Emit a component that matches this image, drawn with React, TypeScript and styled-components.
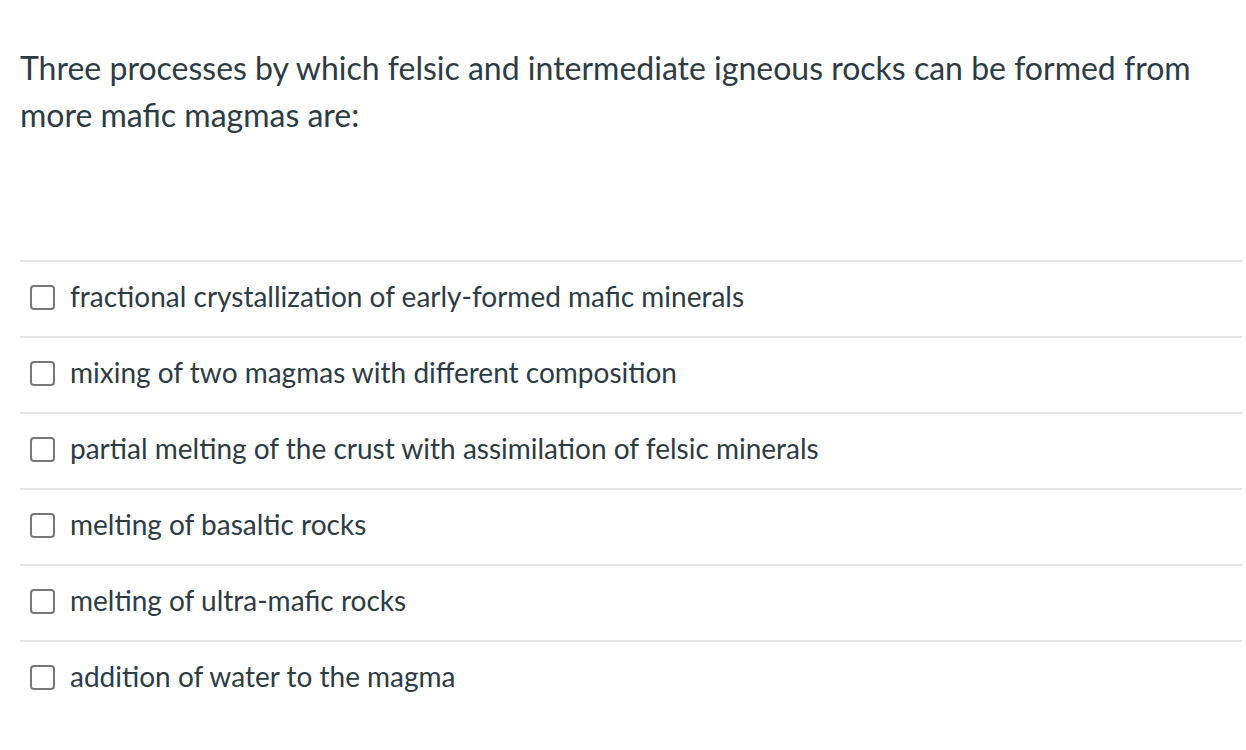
import React from 'react';
import styled, { createGlobalStyle } from 'styled-components';

const GlobalStyle = createGlobalStyle`
  body {
    margin: 0;
    background: #fff;
    font-family: Lato, "Noto Sans", sans-serif;
    color: #2d3b45;
  }
`;

const Page = styled.div`
  padding: 44px 4px 0 20px;
`;

const Question = styled.p`
  margin: 0 0 122px;
  font-size: 32px;
  line-height: 47px;
`;

const Answers = styled.ul`
  list-style: none;
  margin: 0;
  padding: 0;
`;

const Answer = styled.li`
  box-sizing: border-box;
  border-top: 2px solid #e3e3e3;
  height: 76px;
  padding: 0 0 6px 10px;
  display: flex;
  align-items: center;
  gap: 15px;
  font-size: 28px;
`;

const Box = styled.span`
  width: 21px;
  height: 21px;
  border: 2px solid #777;
  border-radius: 4px;
  flex-shrink: 0;
  margin-top: 2px;
`;

const options = [
  'fractional crystallization of early-formed mafic minerals',
  'mixing of two magmas with different composition',
  'partial melting of the crust with assimilation of felsic minerals',
  'melting of basaltic rocks',
  'melting of ultra-mafic rocks',
  'addition of water to the magma',
];

export default function App() {
  return (
    <Page>
      <GlobalStyle />
      <Question>
        Three processes by which felsic and intermediate igneous rocks can be formed from
        more mafic magmas are:
      </Question>
      <Answers>
        {options.map((o) => (
          <Answer key={o}>
            <Box />
            {o}
          </Answer>
        ))}
      </Answers>
    </Page>
  );
}
